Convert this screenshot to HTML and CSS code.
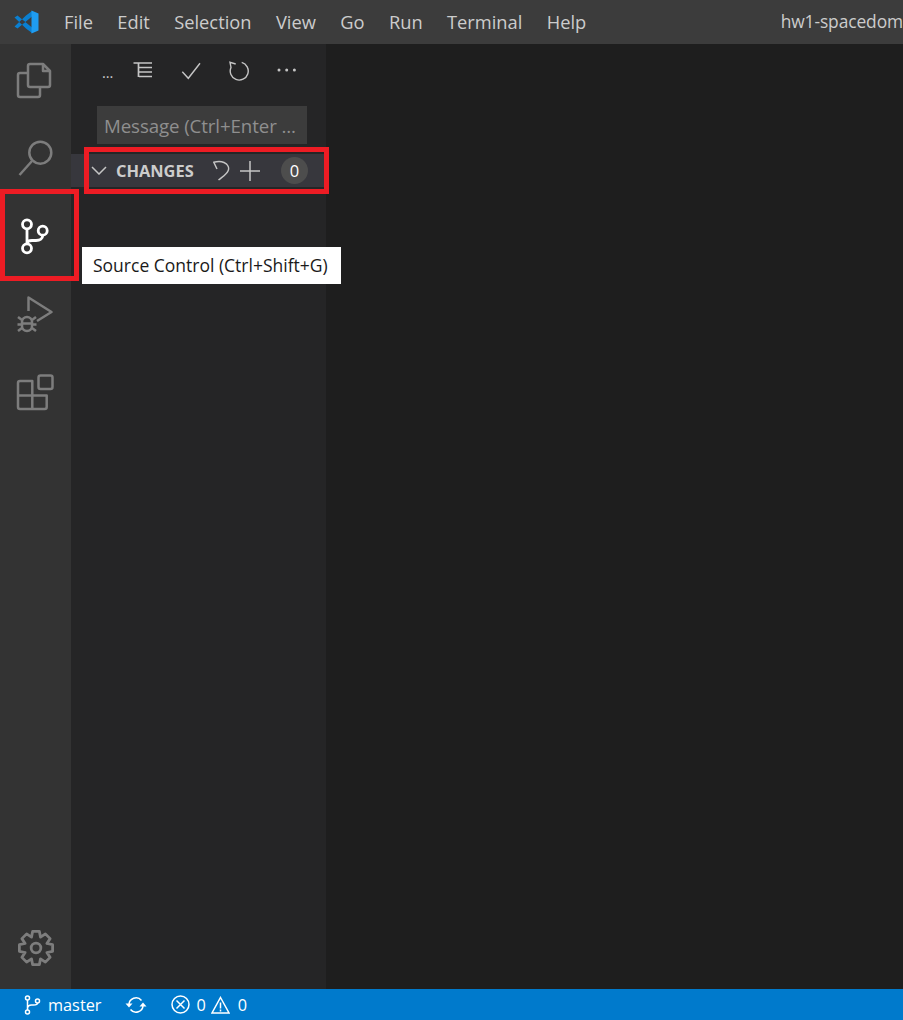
FILE: index.html
```html
<!DOCTYPE html>
<html lang="en">
<head>
<meta charset="utf-8">
<title>Source Control</title>
<link rel="stylesheet" href="styles.css">
</head>
<body>
<div class="window">
  <header class="titlebar">
    <svg class="logo" width="25" height="24" viewBox="0 0 25 24"><path fill="#0a7fd0" d="M.5 7.500 3.500 5.500l14.500 12V23L12 18.500zM.5 16.500 3.500 18.500 18 6.500V1L12 5.500z"/><path fill="#1f9cf0" d="M17.500 .5 24.500 3.500v17l-7 3z"/></svg>
    <nav class="menu"><span>File</span><span>Edit</span><span>Selection</span><span>View</span><span>Go</span><span>Run</span><span>Terminal</span><span>Help</span></nav>
    <div class="project">hw1-spacedom</div>
  </header>
  <div class="main">
    <aside class="activity">
      <div class="activity-top">
        <svg class="act-icon" width="39" height="38" viewBox="0 0 39 38"><path d="M14 2h13l7 7v14a2 2 0 0 1-2 2H14a2 2 0 0 1-2-2V4a2 2 0 0 1 2-2zM27 2v7h7"/><path d="M12 11H4a2 2 0 0 0-2 2v20a2 2 0 0 0 2 2h18a2 2 0 0 0 2-2v-8"/></svg>
        <svg class="act-icon" width="39" height="38" viewBox="0 0 39 38"><circle cx="24.300" cy="12.700" r="11"/><path d="M16 21 3.500 35"/></svg>
        <svg class="act-icon act-on" width="39" height="38" viewBox="0 0 39 38"><circle cx="11" cy="6.300" r="4.500"/><circle cx="11" cy="30.300" r="4.500"/><circle cx="26.700" cy="12.700" r="4.500"/><path d="M11 11v15M11 26c0-3 2-3.500 5-3.500h4c4 0 6.700-2 6.700-5"/></svg>
        <svg class="act-icon" width="39" height="38" viewBox="0 0 39 38"><path d="M12.500 15V1.500L35.500 16 21 25"/><path d="M6 26a5 5 0 0 1 10 0v4a5 5 0 0 1-10 0zM6 27.500h10M2 21l4 3M20 21l-4 3M1.500 28.500h4.500M16 28.500h4.500M2 35l4-3M20 35l-4-3"/></svg>
        <svg class="act-icon" width="39" height="38" viewBox="0 0 39 38"><path d="M4 7h12.300v28H4a2 2 0 0 1-2-2V9a2 2 0 0 1 2-2zM2 21.500h28.700V33a2 2 0 0 1-2 2H16.300"/><rect x="22.500" y="1.500" width="14" height="13.500" rx="2"/></svg>
      </div>
      <svg class="act-icon gear" width="36" height="36" viewBox="-1 -1 26 26"><path d="M19.850 8.750l4.150.83v4.840l-4.150.83 2.350 3.520-3.430 3.430-3.520-2.350-.83 4.150H9.580l-.83-4.150-3.520 2.350-3.430-3.430 2.350-3.520L0 14.420V9.580l4.150-.83L1.800 5.230 5.230 1.800l3.520 2.350L9.580 0h4.840l.83 4.150 3.520-2.350 3.430 3.430z"/><circle cx="12" cy="12" r="3.500"/></svg>
    </aside>
    <section class="sidebar">
      <div class="toolbar">
        <span class="ellipsis">...</span>
        <svg class="tool tool-tree" width="20" height="20" viewBox="0 0 20 20"><path d="M.5 3H19M5.500 3v14M6 7.500h13M6 12h13M6 16.500h13"/></svg>
        <svg class="tool tool-check" width="22" height="20" viewBox="0 0 22 20"><path d="M2.300 11.700l6 6.600L20 3.300"/></svg>
        <svg class="tool tool-refresh" width="22" height="22" viewBox="0 0 22 22"><path d="M13.700 3.400a9 9 0 1 1-10.700 5L2 3.300 7.700 5"/></svg>
        <svg class="tool-dots" width="20" height="4" viewBox="0 0 20 4"><circle cx="2" cy="2" r="1.500"/><circle cx="9.700" cy="2" r="1.500"/><circle cx="17.400" cy="2" r="1.500"/></svg>
      </div>
      <div class="message">Message (Ctrl+Enter ...</div>
      <div class="changes">
        <svg class="chevron" width="16" height="9" viewBox="0 0 16 9"><path d="M1 1l7 7 7-7"/></svg>
        <span class="changes-label">CHANGES</span>
        <svg class="undo" width="18" height="21" viewBox="0 0 18 21"><path d="M4 9 .8 2.200C4 1.300 8 1 11 2.500c4 2 5.500 5.500 4 8.500-1.500 3.500-6 6-9.500 9"/></svg>
        <svg class="plus" width="20" height="20" viewBox="0 0 20 20"><path d="M10 0v20M0 10h20"/></svg>
        <span class="badge">0</span>
      </div>
    </section>
    <main class="editor"></main>
  </div>
  <footer class="statusbar">
    <svg class="st-icon" width="17" height="20" viewBox="0 0 17 20"><circle cx="3.500" cy="3" r="2"/><circle cx="3.500" cy="17" r="2"/><circle cx="13.500" cy="6" r="2"/><path d="M3.500 5v10M3.500 14c0-3 1.500-4 4-4h2c3 0 4-1 4-2"/></svg>
    <span class="st-branch">master</span>
    <svg class="st-icon st-sync" width="22" height="18" viewBox="0 0 22 18"><path d="M4 9a7 7 0 0 1 12.500-4.500M18 9a7 7 0 0 1-12.500 4.500"/><path class="solid" d="M.5 7.500h7L4 11.500zM14.500 10.500h7L18 6.500z"/></svg>
    <svg class="st-icon st-error" width="19" height="19" viewBox="0 0 19 19"><circle cx="9.500" cy="9.500" r="8.500"/><path d="M5.500 5.500l8 8M13.500 5.500l-8 8"/></svg>
    <span class="st-count">0</span>
    <svg class="st-icon st-warn" width="19" height="18" viewBox="0 0 19 18"><path d="M9.500 1.500 18 17H1zM9.500 6.500v6M9.500 13.500v2"/></svg>
    <span class="st-count st-last">0</span>
  </footer>
</div>
<div class="mark mark-activity"></div>
<div class="mark mark-changes"></div>
<div class="tooltip">Source Control (Ctrl+Shift+G)</div>
</body>
</html>
```

FILE: styles.css
```css
* { box-sizing: border-box; }
html, body { margin: 0; height: 100%; }
body { font-family: "Open Sans", "Noto Sans", sans-serif; overflow: hidden; background: #1e1e1e; }
.window { width: 903px; height: 1020px; display: flex; flex-direction: column; }

.titlebar { height: 44px; flex: none; background: #3c3c3c; display: flex; align-items: center; padding-left: 14px; color: #cccccc; font-size: 18.300px; overflow: hidden; }
.logo { flex: none; margin-right: 25px; }
.menu { display: flex; gap: 24.400px; padding-bottom: 2px; }
.project { margin-left: auto; white-space: nowrap; font-size: 17.400px; letter-spacing: -0.1px; padding-bottom: 2px; }

.main { flex: 1; display: flex; min-height: 0; }

.activity { width: 71px; flex: none; background: #333333; display: flex; flex-direction: column; justify-content: space-between; align-items: center; padding: 18px 0 23px; }
.activity-top { display: flex; flex-direction: column; align-items: center; gap: 40px; }
.act-icon { fill: none; stroke: #7d7d7d; stroke-width: 2.500; stroke-linejoin: round; display: block; }
.act-on { stroke: #ffffff; stroke-width: 2.800; }
.gear { stroke-width: 2; }

.sidebar { width: 255px; flex: none; background: #252526; display: flex; flex-direction: column; }
.toolbar { height: 52px; display: flex; align-items: center; padding-left: 31px; color: #cccccc; }
.ellipsis { font-size: 14.500px; width: 31px; margin-top: 5px; flex: none; }
.tool { fill: none; stroke: #c5c5c5; stroke-width: 1.400; flex: none; }
.tool-tree { margin-right: 27px; stroke-width: 1.700; }
.tool-check { margin-right: 26px; }
.tool-refresh { margin-right: 27px; }
.tool-dots { fill: #c5c5c5; flex: none; }

.message { margin: 10px 19px 0 26px; height: 38px; background: #3c3c3c; color: #8f8f8f; font-size: 18.700px; line-height: 40px; padding-left: 7px; white-space: nowrap; overflow: hidden; letter-spacing: -0.1px; }

.changes { margin-top: 10px; height: 33px; background: #37373d; display: flex; align-items: center; padding-left: 20px; color: #cccccc; }
.chevron { fill: none; stroke: #c5c5c5; stroke-width: 1.500; flex: none; margin-right: 9px; }
.changes-label { font-size: 16.400px; font-weight: 700; width: 97px; flex: none; }
.undo { fill: none; stroke: #c5c5c5; stroke-width: 1.500; flex: none; margin-right: 9px; }
.plus { fill: none; stroke: #c5c5c5; stroke-width: 1.500; flex: none; margin-right: 21px; }
.badge { width: 27px; height: 27px; border-radius: 50%; background: #4d4d4d; color: #ffffff; font-size: 16.500px; display: flex; align-items: center; justify-content: center; flex: none; }

.editor { flex: 1; background: #1e1e1e; }

.statusbar { height: 31px; flex: none; background: #007acc; color: #ffffff; display: flex; align-items: center; padding-left: 24px; font-size: 16.300px; }
.st-icon { fill: none; stroke: #ffffff; stroke-width: 1.500; flex: none; }
.st-icon .solid { fill: #ffffff; stroke: none; }
.st-branch { margin-left: 7px; }
.st-sync { margin-left: 24px; }
.st-error { margin-left: 24px; }
.st-count { margin-left: 6px; }
.st-warn { margin-left: 5px; }
.st-last { margin-left: 8px; }

.mark { position: absolute; border: 5px solid #ed1c24; }
.mark-activity { left: 0; top: 189px; width: 79px; height: 92px; }
.mark-changes { left: 84px; top: 147px; width: 245px; height: 47px; }

.tooltip { position: absolute; left: 82px; top: 247px; width: 259px; height: 37px; background: #ffffff; color: #1a1a1a; font-size: 17.500px; line-height: 37px; padding-left: 11px; white-space: nowrap; }
```
